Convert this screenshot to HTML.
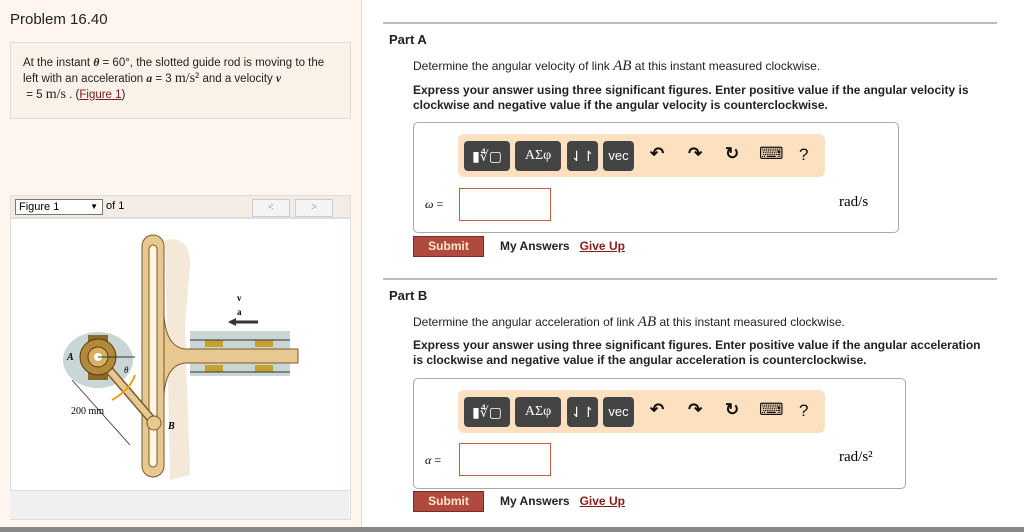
<!DOCTYPE html>
<html><head><style>
body{margin:0;width:1024px;height:532px;overflow:hidden;background:#fff;font-family:"Liberation Sans",sans-serif;position:relative}
.a{position:absolute}
.left{left:0;top:0;width:361px;height:527px;background:#fdf5ee;border-right:1px solid #f0d8c4}
.m{font-family:"Liberation Serif",serif}
.tb{background:#fde0c0;border-radius:6px;height:43px}
.btn{position:absolute;top:8px;height:30px;background:#444;border-radius:4px;color:#fff;font-size:14px;text-align:center;line-height:30px}
.box{border:1px solid #aaa;border-radius:5px;background:#fff}
.sub{background:#b04a3f;border:1px solid #7a2a22;color:#ffe8c8;font-weight:bold;font-size:12px;text-align:center;line-height:19px;width:69px;height:19px}
.t12{font-size:12px;color:#222}
.b12{font-size:12px;font-weight:bold;color:#222;line-height:15px}
.ic{position:absolute;font-size:17px;font-weight:bold;color:#111}
</style></head><body>
<div class="a left"></div>
<div class="a" style="left:10px;top:11px;font-size:15px;color:#222">Problem 16.40</div>
<div class="a" style="left:10px;top:42px;width:339px;height:75px;background:#faf1e8;border:1px solid #ddd"></div>
<div class="a" style="left:23px;top:55px;width:314px;line-height:16px;font-size:11.5px;color:#222">At the instant <i class="m"><b>θ</b></i> = 60°, the slotted guide rod is moving to the left with an acceleration <i class="m"><b>a</b></i> = 3 <span class="m" style="font-size:14px">m/s²</span> and a velocity <i class="m"><b>v</b></i><br>&nbsp;= 5 <span class="m" style="font-size:14px">m/s</span> . (<u style="color:#7a1a1a">Figure 1</u>)</div>
<div class="a" style="left:10px;top:195px;width:339px;height:21px;background:#f3ece5;border:1px solid #ddd"></div>
<div class="a" style="left:15px;top:199px;width:83px;height:14px;border:1px solid #777;background:#fff;font-size:11px;line-height:14px;padding-left:3px">Figure 1<span style="position:absolute;right:4px;font-size:8px">▼</span></div>
<div class="a" style="left:106px;top:200px;font-size:11px">of 1</div>
<div class="a" style="left:252px;top:199px;width:36px;height:16px;border:1px solid #ccc;background:#f4f4f4;color:#aaa;font-size:10px;text-align:center;line-height:16px">&lt;</div>
<div class="a" style="left:295px;top:199px;width:36px;height:16px;border:1px solid #ccc;background:#f4f4f4;color:#aaa;font-size:10px;text-align:center;line-height:16px">&gt;</div>
<div class="a" style="left:10px;top:218px;width:339px;height:300px;background:#fff;border:1px solid #ddd"></div>
<div class="a" style="left:10px;top:490px;width:339px;height:28px;background:#f0f0f0;border-top:1px solid #ddd"></div>
<svg class="a" style="left:40px;top:225px" width="320" height="265" viewBox="0 0 320 265">
<path d="M125 15 Q150 10 150 40 L145 100 L150 250 L130 255 Z" fill="#efdfc8" opacity=".7"/>
<ellipse cx="58" cy="135" rx="35" ry="28" fill="#c9d6d6"/>
<rect x="150" y="106" width="100" height="45" fill="#c9d6d6"/>
<rect x="102" y="10" width="22" height="242" rx="11" fill="#e6c890" stroke="#7a5a2a"/>
<rect x="109" y="20" width="8" height="222" rx="4" fill="#fff5e0" stroke="#7a5a2a"/>
<path d="M124 90 Q126 122 145 124 L258 124 L258 138 L145 138 Q126 140 124 170 Z" fill="#e6c890" stroke="#7a5a2a"/>
<rect x="165" y="115" width="18" height="7" fill="#c9a030"/><rect x="215" y="115" width="18" height="7" fill="#c9a030"/>
<rect x="165" y="140" width="18" height="7" fill="#c9a030"/><rect x="215" y="140" width="18" height="7" fill="#c9a030"/>
<line x1="150" y1="115" x2="250" y2="115" stroke="#333"/><line x1="150" y1="147" x2="250" y2="147" stroke="#333"/>
<path d="M218 97 L190 97" stroke="#333" stroke-width="3"/><path d="M188 97 L196 93 L196 101Z" fill="#333"/>
<text x="197" y="76" font-size="9" font-family="Liberation Serif" font-weight="bold">v</text>
<text x="197" y="90" font-size="9" font-family="Liberation Serif" font-weight="bold">a</text>
<path d="M58 132 L112 195" stroke="#7a5a2a" stroke-width="9"/><path d="M58 132 L112 195" stroke="#e6c890" stroke-width="6"/>
<rect x="48" y="110" width="20" height="45" fill="#8a6a2a"/>
<circle cx="58" cy="132" r="18" fill="#b08a3a" stroke="#5a3a10"/><circle cx="58" cy="132" r="10" fill="#d8b060" stroke="#5a3a10"/><circle cx="58" cy="132" r="4" fill="#fff"/>
<circle cx="114" cy="198" r="7" fill="#e6c890" stroke="#7a5a2a"/>
<line x1="58" y1="132" x2="95" y2="132" stroke="#333"/>
<path d="M95 150 Q90 165 72 175" stroke="#e8a020" stroke-width="2" fill="none"/>
<text x="27" y="135" font-size="10" font-family="Liberation Serif" font-style="italic" font-weight="bold">A</text>
<text x="84" y="148" font-size="9" font-family="Liberation Serif" font-style="italic">θ</text>
<text x="128" y="204" font-size="10" font-family="Liberation Serif" font-style="italic" font-weight="bold">B</text>
<text x="31" y="189" font-size="10" font-family="Liberation Serif">200 mm</text>
<line x1="32" y1="155" x2="90" y2="220" stroke="#333" stroke-width=".8"/>
</svg>
<div class="a" style="left:0;top:527px;width:1024px;height:5px;background:#888"></div>

<div class="a" style="left:383px;top:22px;width:614px;height:2px;background:#bbb"></div>
<div class="a" style="left:389px;top:32px;font-size:13px;font-weight:bold;color:#222">Part A</div>
<div class="a t12" style="left:413px;top:58px">Determine the angular velocity of link <i class="m" style="font-size:15px">AB</i> at this instant measured clockwise.</div>
<div class="a b12" style="left:413px;top:83px;width:590px">Express your answer using three significant figures. Enter positive value if the angular velocity is clockwise and negative value if the angular velocity is counterclockwise.</div>
<div class="a box" style="left:413px;top:122px;width:484px;height:109px"></div>
<div class="a tb" style="left:458px;top:134px;width:367px"></div>
<div class="a btn" style="left:464px;top:141px;width:46px">▮∜▢</div>
<div class="a btn" style="left:515px;top:141px;width:46px;font-family:'Liberation Serif'">ΑΣφ</div>
<div class="a btn" style="left:567px;top:141px;width:31px">⇃↾</div>
<div class="a btn" style="left:603px;top:141px;width:31px;font-size:13px">vec</div>
<div class="ic" style="left:650px;top:144px">↶</div><div class="ic" style="left:688px;top:144px">↷</div><div class="ic" style="left:725px;top:144px">↻</div><div class="ic" style="left:759px;top:144px;font-weight:normal">⌨</div><div class="ic" style="left:799px;top:145px;font-weight:normal">?</div>
<div class="a m" style="left:425px;top:197px;font-size:12px"><i>ω</i> =</div>
<div class="a" style="left:459px;top:188px;width:90px;height:31px;border:1px solid #c06040;background:#fff"></div>
<div class="a m" style="left:839px;top:194px;font-size:15px">rad/s</div>
<div class="a sub" style="left:413px;top:236px">Submit</div>
<div class="a b12" style="left:500px;top:239px">My Answers&nbsp;&nbsp;&nbsp;<u style="color:#8a1a1a">Give Up</u></div>

<div class="a" style="left:383px;top:278px;width:614px;height:2px;background:#bbb"></div>
<div class="a" style="left:389px;top:288px;font-size:13px;font-weight:bold;color:#222">Part B</div>
<div class="a t12" style="left:413px;top:314px">Determine the angular acceleration of link <i class="m" style="font-size:15px">AB</i> at this instant measured clockwise.</div>
<div class="a b12" style="left:413px;top:338px;width:570px">Express your answer using three significant figures. Enter positive value if the angular acceleration is clockwise and negative value if the angular acceleration is counterclockwise.</div>
<div class="a box" style="left:413px;top:378px;width:491px;height:109px"></div>
<div class="a tb" style="left:458px;top:390px;width:367px"></div>
<div class="a btn" style="left:464px;top:397px;width:46px">▮∜▢</div>
<div class="a btn" style="left:515px;top:397px;width:46px;font-family:'Liberation Serif'">ΑΣφ</div>
<div class="a btn" style="left:567px;top:397px;width:31px">⇃↾</div>
<div class="a btn" style="left:603px;top:397px;width:31px;font-size:13px">vec</div>
<div class="ic" style="left:650px;top:400px">↶</div><div class="ic" style="left:688px;top:400px">↷</div><div class="ic" style="left:725px;top:400px">↻</div><div class="ic" style="left:759px;top:400px;font-weight:normal">⌨</div><div class="ic" style="left:799px;top:401px;font-weight:normal">?</div>
<div class="a m" style="left:425px;top:453px;font-size:12px"><i>α</i> =</div>
<div class="a" style="left:459px;top:443px;width:90px;height:31px;border:1px solid #c06040;background:#fff"></div>
<div class="a m" style="left:839px;top:449px;font-size:15px">rad/s²</div>
<div class="a sub" style="left:413px;top:491px">Submit</div>
<div class="a b12" style="left:500px;top:494px">My Answers&nbsp;&nbsp;&nbsp;<u style="color:#8a1a1a">Give Up</u></div>
</body></html>
